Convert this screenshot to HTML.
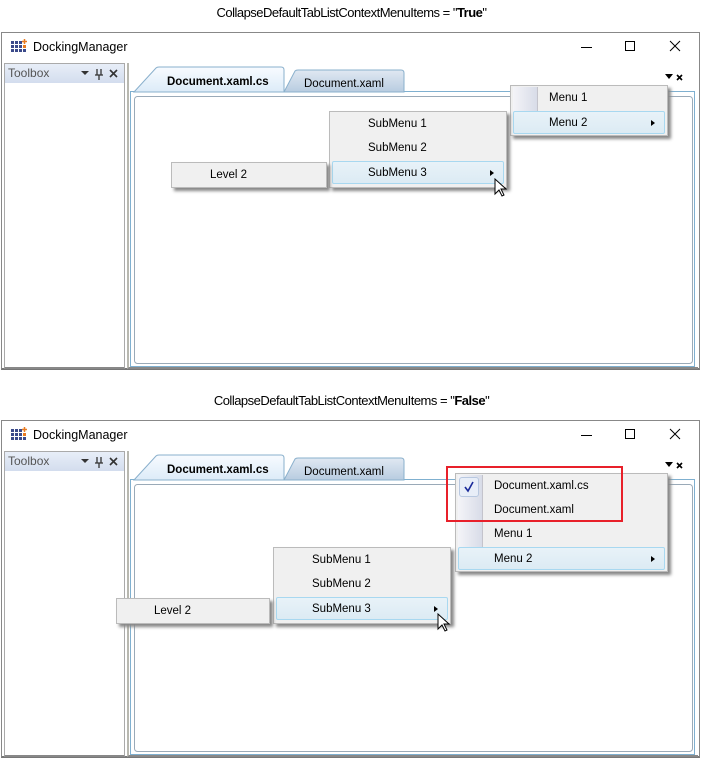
<!DOCTYPE html>
<html><head><meta charset="utf-8"><style>
*{margin:0;padding:0;box-sizing:border-box}
body{width:703px;height:759px;background:#fff;position:relative;overflow:hidden;font-family:"Liberation Sans",sans-serif;font-size:12px;color:#000}
.a{position:absolute}
.cap{position:absolute;left:0;width:703px;text-align:center;font-size:13px;letter-spacing:-0.5px}
.win{position:absolute;left:1px;width:699px;height:338px;border:1px solid #888;border-bottom:2px solid #777;background:#fff}
.tb{position:absolute;left:2px;top:30px;width:121px;height:306px;border:1px solid #aaa;border-bottom:2px solid #888;background:#fff}
.tbh{position:absolute;left:0;top:0;width:119px;height:19px;background:linear-gradient(#e8eef8,#d3ddee);color:#555;font-size:12px;padding:2px 0 0 3px}
.doc{position:absolute;left:125px;top:30px;width:571px;height:306px;border-left:2px solid #b8b8b0;border-bottom:2px solid #888}
.menu{position:absolute;background:#f0f0f0;border:1px solid #bbb;box-shadow:3px 3px 3px #888}
.it{position:absolute;left:2px;right:2px;height:23px;font-size:11.5px;padding-top:5px}
.hl{background:linear-gradient(#e8f2f8,#dcebf4);border:1px solid #a8d8f0;border-radius:2px}
.arr{position:absolute;right:9px;top:8px;width:0;height:0;border-left:4px solid #000;border-top:3.5px solid transparent;border-bottom:3.5px solid transparent}
.icol{position:absolute;left:2px;top:1px;bottom:1px;width:25px;background:linear-gradient(90deg,#f4f4f8,#d8dce8);border-right:1px solid #c4c4cc}
</style></head><body>

<!-- PANEL 1 -->
<div class="cap" style="top:5px">CollapseDefaultTabListContextMenuItems = "<b>True</b>"</div>
<div class="win" style="top:32px">
  <svg class="a" style="left:9px;top:6px" width="16" height="16"><g fill="#3b4a8a"><rect x="0" y="2" width="3" height="3"/><rect x="4" y="2" width="3" height="3"/><rect x="8" y="2" width="3" height="3"/><rect x="0" y="6" width="3" height="3"/><rect x="4" y="6" width="3" height="3"/><rect x="8" y="6" width="3" height="3"/><rect x="0" y="10" width="3" height="3"/><rect x="4" y="10" width="3" height="3"/><rect x="8" y="10" width="3" height="3"/></g><rect x="12" y="6" width="3" height="3" fill="#e87a20"/><rect x="12" y="10" width="3" height="3" fill="#3b4a8a"/><path d="M13.5 0v5M11 2.5h5" stroke="#e87a20" stroke-width="1.5"/></svg>
  <div class="a" style="left:31px;top:7px;font-size:12.5px">DockingManager</div>
  <div class="a" style="left:579px;top:14px;width:11px;height:1px;background:#000"></div>
  <div class="a" style="left:623px;top:8px;width:10px;height:10px;border:1px solid #000"></div>
  <svg class="a" style="left:667px;top:7px" width="12" height="12"><path d="M1 1L11 11M11 1L1 11" stroke="#000" stroke-width="1"/></svg>
  <div class="tb"><div class="tbh">Toolbox</div>
    <div class="a" style="left:76px;top:7px;border-top:4px solid #333;border-left:4px solid transparent;border-right:4px solid transparent"></div>
    <svg class="a" style="left:89px;top:4px" width="10" height="12"><path d="M3 1v6M7 1v6M1 7h8M5 7v5" stroke="#333" stroke-width="1.3" fill="none"/></svg>
    <svg class="a" style="left:104px;top:5px" width="10" height="10"><path d="M1 1l7 7M8 1l-7 7" stroke="#333" stroke-width="1.6"/></svg>
  </div>
  <div class="doc">
    <svg class="a" style="left:-2px;top:0" width="572" height="306">
      <rect x="3.5" y="28.5" width="564" height="275" fill="none" stroke="#7fb0d0"/>
      <rect x="7.5" y="33.5" width="558" height="267" rx="3" fill="#fff" stroke="#9aaab8"/>
      <path d="M7 29 L29 5 Q30 4 32 4 L154 4 Q157 4 157 7 L157 29Z" fill="url(#g1)" stroke="#8ab0cc"/>
      <path d="M157 29 L168 8 Q169 7 171 7 L274 7 Q277 7 277 10 L277 29Z" fill="url(#g2)" stroke="#8ab0cc"/>
      <defs><linearGradient id="g1" x1="0" y1="0" x2="0" y2="1"><stop offset="0" stop-color="#f8fbff"/><stop offset="1" stop-color="#dcebf8"/></linearGradient>
      <linearGradient id="g2" x1="0" y1="0" x2="0" y2="1"><stop offset="0" stop-color="#e0e8f2"/><stop offset="1" stop-color="#b8cce0"/></linearGradient></defs>
      <text x="40" y="22" font-size="11.5" font-weight="bold" font-family="Liberation Sans">Document.xaml.cs</text>
      <text x="177" y="24" font-size="11.5" font-family="Liberation Sans">Document.xaml</text>
      <path d="M538 11h8l-4 5z" fill="#000"/>
      <path d="M550 12l5 5M555 12l-5 5" stroke="#000" stroke-width="1.6"/>
    </svg>
  </div>
</div>
<div class="menu" style="left:510px;top:85px;width:158px;height:51px"><div class="icol"></div>
  <div class="it" style="top:1px;padding-left:36px">Menu 1</div>
  <div class="it hl" style="top:25px;padding-left:35px">Menu 2<div class="arr"></div></div>
</div>
<div class="menu" style="left:329px;top:111px;width:178px;height:77px">
  <div class="it" style="top:1px;padding-left:36px">SubMenu 1</div>
  <div class="it" style="top:25px;padding-left:36px">SubMenu 2</div>
  <div class="it hl" style="top:49px;padding-left:35px">SubMenu 3<div class="arr"></div></div>
</div>
<div class="menu" style="left:171px;top:162px;width:156px;height:26px"><div class="it" style="top:1px;padding-left:36px">Level 2</div></div>
<svg class="a" style="left:494px;top:178px" width="14" height="20"><path d="M1 1v15l4-4 3 6 2-1-3-6h5z" fill="#fff" stroke="#000"/></svg>

<!-- PANEL 2 -->
<div class="cap" style="top:393px">CollapseDefaultTabListContextMenuItems = "<b>False</b>"</div>
<div class="win" style="top:420px">
  <svg class="a" style="left:9px;top:6px" width="16" height="16"><g fill="#3b4a8a"><rect x="0" y="2" width="3" height="3"/><rect x="4" y="2" width="3" height="3"/><rect x="8" y="2" width="3" height="3"/><rect x="0" y="6" width="3" height="3"/><rect x="4" y="6" width="3" height="3"/><rect x="8" y="6" width="3" height="3"/><rect x="0" y="10" width="3" height="3"/><rect x="4" y="10" width="3" height="3"/><rect x="8" y="10" width="3" height="3"/></g><rect x="12" y="6" width="3" height="3" fill="#e87a20"/><rect x="12" y="10" width="3" height="3" fill="#3b4a8a"/><path d="M13.5 0v5M11 2.5h5" stroke="#e87a20" stroke-width="1.5"/></svg>
  <div class="a" style="left:31px;top:7px;font-size:12.5px">DockingManager</div>
  <div class="a" style="left:579px;top:14px;width:11px;height:1px;background:#000"></div>
  <div class="a" style="left:623px;top:8px;width:10px;height:10px;border:1px solid #000"></div>
  <svg class="a" style="left:667px;top:7px" width="12" height="12"><path d="M1 1L11 11M11 1L1 11" stroke="#000" stroke-width="1"/></svg>
  <div class="tb"><div class="tbh">Toolbox</div>
    <div class="a" style="left:76px;top:7px;border-top:4px solid #333;border-left:4px solid transparent;border-right:4px solid transparent"></div>
    <svg class="a" style="left:89px;top:4px" width="10" height="12"><path d="M3 1v6M7 1v6M1 7h8M5 7v5" stroke="#333" stroke-width="1.3" fill="none"/></svg>
    <svg class="a" style="left:104px;top:5px" width="10" height="10"><path d="M1 1l7 7M8 1l-7 7" stroke="#333" stroke-width="1.6"/></svg>
  </div>
  <div class="doc">
    <svg class="a" style="left:-2px;top:0" width="572" height="306">
      <rect x="3.5" y="28.5" width="564" height="275" fill="none" stroke="#7fb0d0"/>
      <rect x="7.5" y="33.5" width="558" height="267" rx="3" fill="#fff" stroke="#9aaab8"/>
      <path d="M7 29 L29 5 Q30 4 32 4 L154 4 Q157 4 157 7 L157 29Z" fill="url(#g1)" stroke="#8ab0cc"/>
      <path d="M157 29 L168 8 Q169 7 171 7 L274 7 Q277 7 277 10 L277 29Z" fill="url(#g2)" stroke="#8ab0cc"/>
      <text x="40" y="22" font-size="11.5" font-weight="bold" font-family="Liberation Sans">Document.xaml.cs</text>
      <text x="177" y="24" font-size="11.5" font-family="Liberation Sans">Document.xaml</text>
      <path d="M538 11h8l-4 5z" fill="#000"/>
      <path d="M550 12l5 5M555 12l-5 5" stroke="#000" stroke-width="1.6"/>
    </svg>
  </div>
</div>
<div class="menu" style="left:455px;top:473px;width:213px;height:99px"><div class="icol"></div>
  <div class="a" style="left:3px;top:3px;width:20px;height:20px;border:1px solid #b8c8e0;border-radius:3px;background:#e8eef8"></div>
  <svg class="a" style="left:7px;top:7px" width="12" height="12"><path d="M2 6l3 4 5-9" fill="none" stroke="#1a2a9a" stroke-width="1.6"/></svg>
  <div class="it" style="top:1px;padding-left:36px">Document.xaml.cs</div>
  <div class="it" style="top:25px;padding-left:36px">Document.xaml</div>
  <div class="it" style="top:49px;padding-left:36px">Menu 1</div>
  <div class="it hl" style="top:73px;padding-left:35px">Menu 2<div class="arr"></div></div>
</div>
<div class="a" style="left:446px;top:466px;width:177px;height:56px;border:2.5px solid #e8202a"></div>
<div class="menu" style="left:273px;top:547px;width:178px;height:77px">
  <div class="it" style="top:1px;padding-left:36px">SubMenu 1</div>
  <div class="it" style="top:25px;padding-left:36px">SubMenu 2</div>
  <div class="it hl" style="top:49px;padding-left:35px">SubMenu 3<div class="arr"></div></div>
</div>
<div class="menu" style="left:116px;top:598px;width:154px;height:26px"><div class="it" style="top:1px;padding-left:35px">Level 2</div></div>
<svg class="a" style="left:437px;top:613px" width="14" height="20"><path d="M1 1v15l4-4 3 6 2-1-3-6h5z" fill="#fff" stroke="#000"/></svg>
</body></html>
